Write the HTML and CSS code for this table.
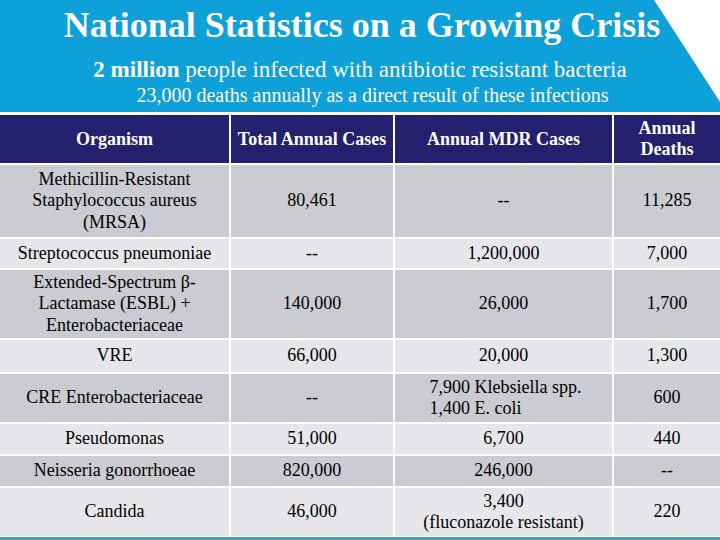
FILE: index.html
```html
<!DOCTYPE html>
<html lang="en">
<head>
<meta charset="utf-8">
<title>National Statistics on a Growing Crisis</title>
<link rel="stylesheet" href="styles.css">
</head>
<body>
<div class="page">
  <header class="banner">
    <h1 class="title">National Statistics on a Growing Crisis</h1>
    <p class="sub"><b>2 million</b> people infected with antibiotic resistant bacteria</p>
    <p class="sub2">23,000 deaths annually as a direct result of these infections</p>
  </header>
  <div class="table">
    <div class="cell head">Organism</div>
    <div class="cell head">Total Annual Cases</div>
    <div class="cell head">Annual MDR Cases</div>
    <div class="cell head">Annual<br>Deaths</div>

    <div class="cell dark">Methicillin-Resistant<br>Staphylococcus aureus<br>(MRSA)</div>
    <div class="cell dark">80,461</div>
    <div class="cell dark">--</div>
    <div class="cell dark">11,285</div>

    <div class="cell light">Streptococcus pneumoniae</div>
    <div class="cell light">--</div>
    <div class="cell light">1,200,000</div>
    <div class="cell light">7,000</div>

    <div class="cell dark">Extended-Spectrum β-<br>Lactamase (ESBL) +<br>Enterobacteriaceae</div>
    <div class="cell dark">140,000</div>
    <div class="cell dark">26,000</div>
    <div class="cell dark">1,700</div>

    <div class="cell light">VRE</div>
    <div class="cell light">66,000</div>
    <div class="cell light">20,000</div>
    <div class="cell light">1,300</div>

    <div class="cell dark">CRE Enterobacteriaceae</div>
    <div class="cell dark">--</div>
    <div class="cell dark"><span class="left">7,900 Klebsiella spp.<br>1,400 E. coli</span></div>
    <div class="cell dark">600</div>

    <div class="cell light">Pseudomonas</div>
    <div class="cell light">51,000</div>
    <div class="cell light">6,700</div>
    <div class="cell light">440</div>

    <div class="cell dark">Neisseria gonorrhoeae</div>
    <div class="cell dark">820,000</div>
    <div class="cell dark">246,000</div>
    <div class="cell dark">--</div>

    <div class="cell light">Candida</div>
    <div class="cell light">46,000</div>
    <div class="cell light">3,400<br>(fluconazole resistant)</div>
    <div class="cell light">220</div>
  </div>
  <div class="rule"></div>
</div>
</body>
</html>
```
FILE: styles.css
```css
html, body {
  margin: 0;
  padding: 0;
  background: #ffffff;
}
.page {
  width: 720px;
  height: 540px;
  overflow: hidden;
  font-family: "Liberation Serif", "Times New Roman", serif;
  color: #000;
}
.banner {
  height: 112px;
  background: #0ea0d8;
  clip-path: polygon(0 0, 654px 0, 720px 102px, 720px 112px, 0 112px);
  color: #ffffff;
  text-align: center;
  padding-top: 5px;
  box-sizing: border-box;
}
.title {
  margin: 0;
  font-size: 36px;
  line-height: 40px;
  font-weight: bold;
  padding-left: 4px;
}
.sub {
  margin: 12px 0 0 0;
  font-size: 23px;
  line-height: 26px;
}
.sub2 {
  margin: 0;
  font-size: 20px;
  line-height: 24px;
  padding-left: 25px;
}
.table {
  margin-top: 3px;
  display: grid;
  grid-template-columns: 229px 162px 217px 106px;
  grid-template-rows: 48px 72px 29px 68px 32px 48px 30px 30px 48px;
  gap: 2px;
  font-size: 18px;
  line-height: 21.5px;
}
.cell {
  display: flex;
  align-items: center;
  justify-content: center;
  text-align: center;
}
.head {
  background: #23206e;
  color: #ffffff;
  font-weight: bold;
  line-height: 21px;
}
.dark {
  background: #cbcbd2;
}
.light {
  background: #e7e7eb;
}
.left {
  display: inline-block;
  text-align: left;
  padding-left: 4px;
}
.rule {
  margin-top: 1px;
  height: 3px;
  background: #4e9aa0;
}
```
